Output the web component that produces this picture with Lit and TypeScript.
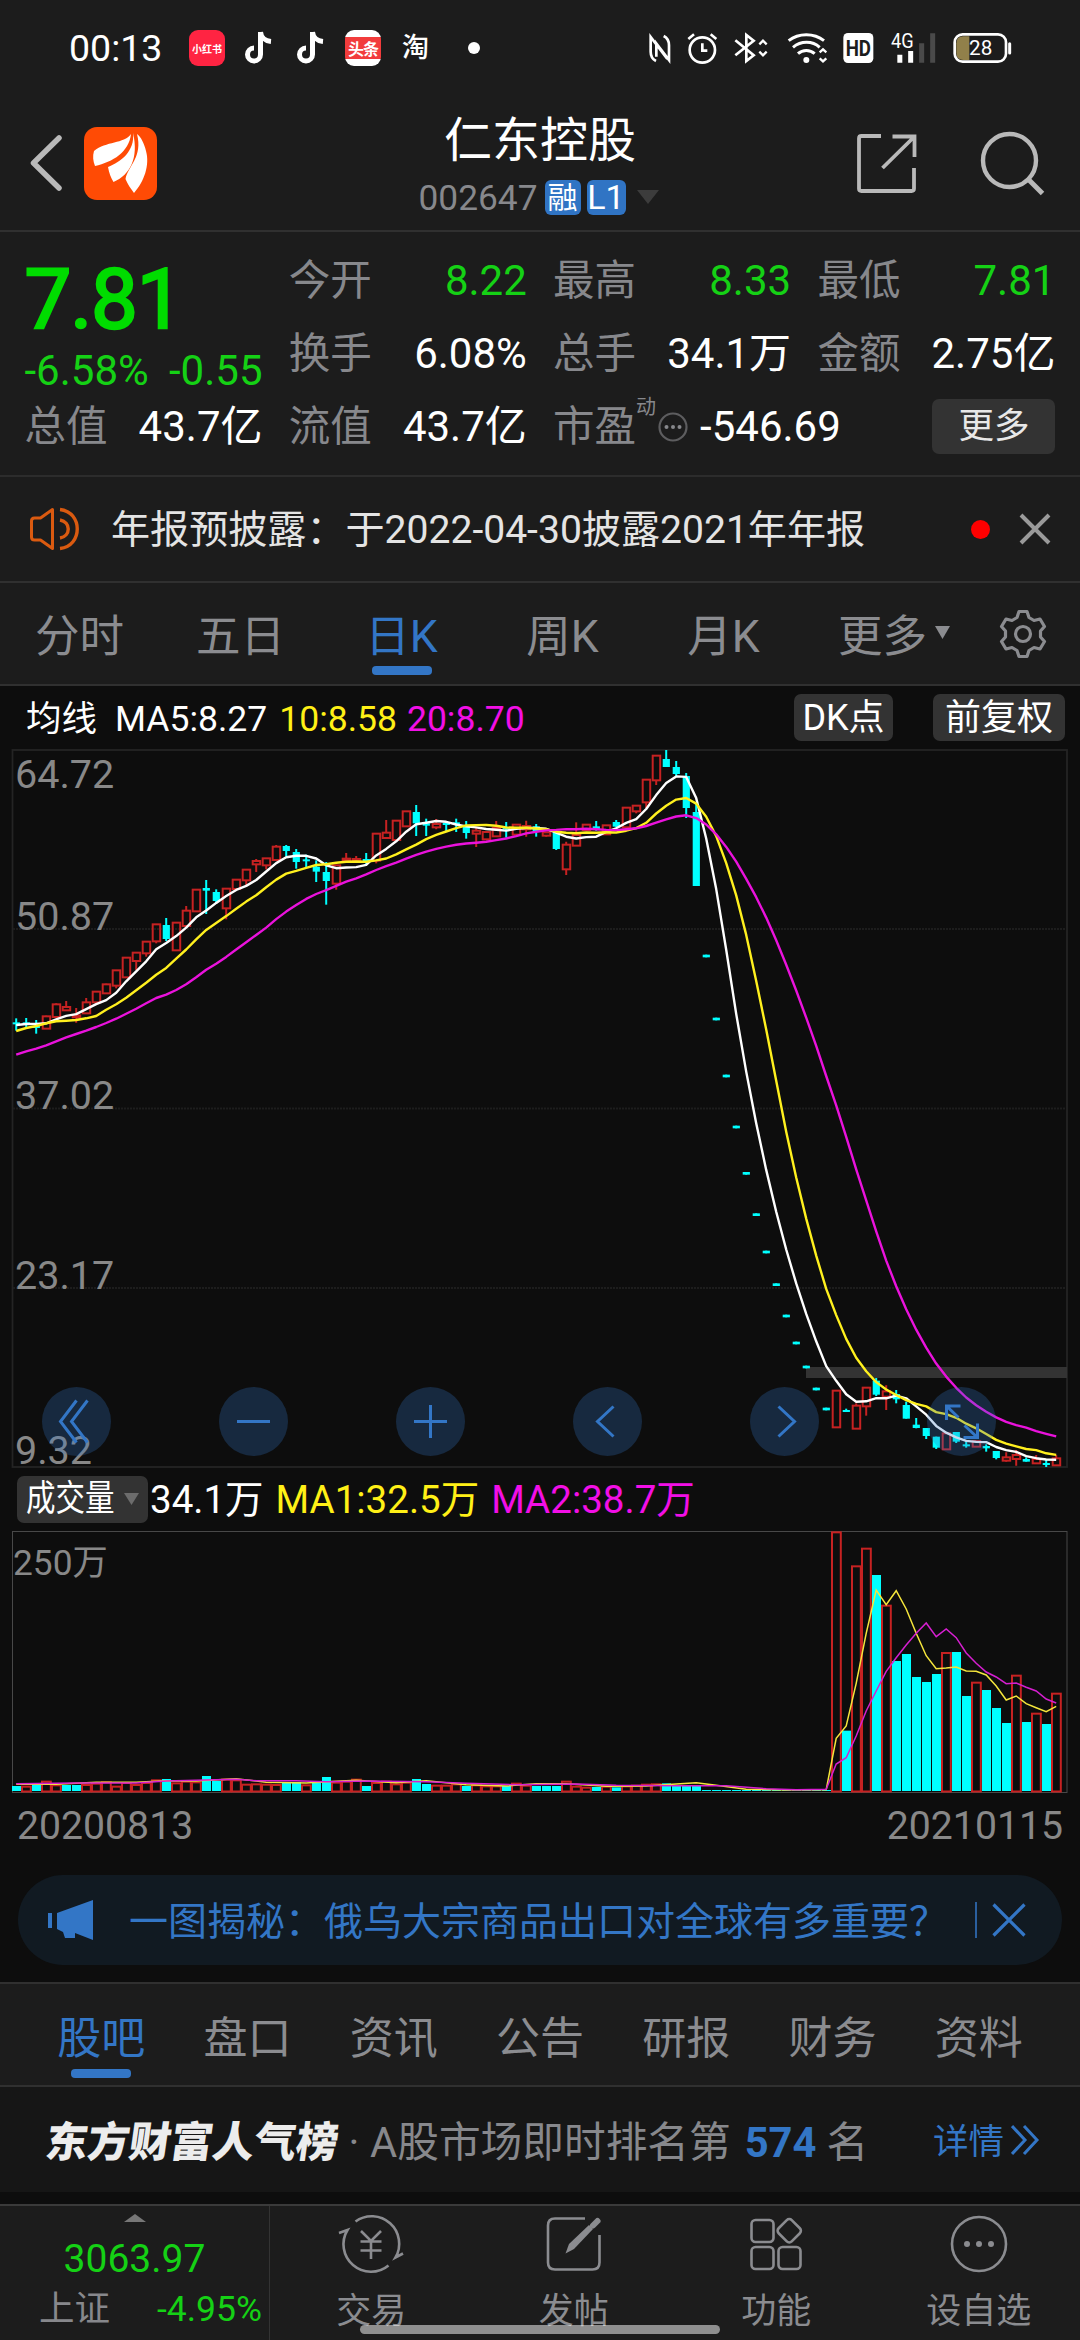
import { LitElement, html, svg, css } from "lit";
import { customElement } from "lit/decorators.js";

type Candle = [kind: "u" | "d", high: number, low: number, top: number, bottom: number];

/* Vertical values are thirds of a pixel below TOP. */
const TOP = 740;
const PITCH = 10;
const FIRST = 16.2;
const cx = (i: number) => FIRST + PITCH * i;
const py = (v: number) => TOP + v / 3;

const parse = (s: string, shift = 0): Candle[] =>
  s.trim().split(/\s+/).map((t) => {
    const n = t.slice(1).split(",").map((v) => Number(v) + shift);
    return [t[0] as "u" | "d", n[0], n[1], n[2], n[3]];
  });

const dashes = [648, 837, 1008, 1161, 1300, 1424, 1536, 1634, 1728, 1809, 1881, 1947, 2007].map(
  (v): Candle => ["d", v - 4, v + 4, v - 4, v + 4],
);

const candles: Candle[] = [
  ...parse(`d835,872,847,852 d834,862,847,852 d840,881,858,863 u827,866,829,866 u790,834,793,831
    u783,812,801,811 u804,848,826,830 u774,820,787,820 u755,787,755,787 u731,760,733,760
    u691,745,691,737 u653,712,653,712 u638,690,638,663 u605,650,605,640 u553,610,553,604
    d534,603,555,597 u548,631,548,631 u498,558,512,558 u449,514,449,514 d420,522,444,452
    d448,490,456,483 u446,538,446,505 u419,447,419,447 u389,436,389,421 u357,396,363,373
    u355,388,355,376 u315,360,320,360 d315,350,318,333 d327,386,336,366 d344,382,358,363
    d361,426,380,395 d366,494,396,423 u376,449,376,431 u339,366,356,362 u348,366,357,362
    d339,374,357,361 u281,370,281,362 u240,295,278,294 u242,300,242,300 u214,259,214,259
    d195,288,216,250 d236,288,250,257 u237,268,252,262 d245,275,249,254 d236,276,247,254
    d243,296,258,279 u262,321,272,281 u276,298,276,298 u243,289,264,289 d246,293,262,268
    u254,284,254,284 u242,290,258,268 d252,290,259,275 u276,290,277,287 d275,330,279,327
    u305,405,314,388 u247,317,285,317 u254,270,254,270 d243,272,259,270 u256,283,256,283
    d240,262,246,260 u203,262,203,262 u197,220,197,214 u119,205,119,187 u47,135,47,121
    d30,81,57,81 d63,108,81,102 d99,234,108,204 d190,438,216,438`),
  ...dashes,
  ...parse(
    `u392,502,392,502 d446,456,450,456 u430,506,437,506 u383,467,383,439 d354,408,362,404
    u376,450,394,410 d390,430,402,418 d425,476,435,476 d474,505,494,504 d504,537,504,528
    d530,567,530,563 u520,568,520,568 d516,549,516,545 d543,563,553,558 u543,560,543,560
    d553,575,558,565 d573,598,573,594 u577,605,592,602 u570,617,585,597 d592,605,597,605
    u585,610,597,610 d600,621,609,614 u585,616,595,616`,
    1560,
  ),
];

const closes = candles.map((c) => (c[0] === "u" ? c[3] : c[4]));

/* The head covers the days whose window starts before the visible range. */
const average = (span: number, head: number[]) =>
  closes.map((_, i) =>
    i < head.length ? head[i] : closes.slice(i - span + 1, i + 1).reduce((a, b) => a + b, 0) / span,
  );

const toPoints = (values: number[]) => values.map((v, i) => `${cx(i)},${py(v).toFixed(1)}`).join(" ");

const ma5 = toPoints(average(5, [855, 852, 852, 850]));
const ma10 = toPoints(average(10, [873, 864, 858, 850, 844, 842, 840, 835, 828]));
const ma20 = toPoints(
  average(20, [944, 934, 926, 916, 904, 892, 882, 872, 861, 849, 836, 821, 806, 790, 774, 764, 750, 733, 712]),
);

/* Volume tops are thirds of a pixel below 1740. */
const vy = (v: number) => 1740 + v / 3;
const volumes = `d138 u137 d135 u122 u133 d135 d135 u132 u128 u124 u137 u126 u132 u126 u118 d117 u127 u122 u124
  d108 d123 u116 u118 u131 u130 u131 u132 d126 d126 u133 d126 d111 u125 u122 u116 d138 u126 u122 u130 u125 d117
  d132 u134 u134 u130 d138 u133 u136 u136 d138 u128 u134 d138 d138 d138 u122 u137 u140 d141 u137 d142 u136 u134
  u131 u130 d130 d138 d138 d135 d150 d150 d150 d150 d150 d150 d150 d150 d150 d150 d150 d150 d150
  u-626 d-28 u-524 u-577 d-495 u-406 d-237 d-258 d-189 d-174 d-198 u-264 d-264 d-132 u-175 d-150 d-96 d-51 u-196
  d-54 u-82 d-48 u-142`
  .trim()
  .split(/\s+/)
  .map((t) => ({ up: t[0] === "u", top: Number(t.slice(1)) }));

const line = (pairs: number[][], tail: number[]) =>
  [...pairs, ...tail.map((v, k) => [82 + k, v - 660])].map(([i, v]) => `${cx(i)},${vy(v).toFixed(1)}`).join(" ");

const vma1 = line(
  [[0,133],[4,133],[8,127],[12,127],[15,122],[18,123],[22,116],[25,127],[29,129],[32,124],[34,121],[38,128],[41,122],
   [45,134],[49,138],[52,131],[55,131],[59,139],[63,138],[66,132],[68,128],[70,136],[73,148],[77,150],[81,149]],
  [655,618,490,340,210,254,212,267,340,407,446,444,441,453,454,465,498,540,528,551,563,575,559],
);
const vma2 = line(
  [[0,131],[6,129],[12,129],[15,123],[22,118],[24,122],[28,122],[31,125],[35,123],[41,125],[45,130],[50,134],[56,132],
   [60,136],[66,137],[71,137],[75,146],[78,149],[81,148]],
  [732,713,648,573,513,454,413,375,340,309,350,327,353,399,430,456,471,491,489,502,513,537,549],
);

@customElement("status-bar")
export class StatusBar extends LitElement {
  static styles = css`
    :host { display: flex; height: 96px; align-items: center; box-sizing: border-box; padding: 0 66px 0 69px; color: #fff; }
    .time { width: 120px; font-size: 37.500px; line-height: 96px; }
    .app { width: 36px; height: 36px; border-radius: 9px; display: grid; place-items: center; white-space: nowrap; font-weight: 700; }
    .red { background: #ff2442; font-size: 10px; }
    .news { background: linear-gradient(#fff 7px, #f23c3c 7px, #f23c3c 29px, #fff 29px); font-size: 16px; letter-spacing: -1px; margin-left: 20px; }
    .note { width: 28px; height: 34px; margin-left: 20px; }
    .note + .note { margin-left: 24px; }
    .tao { font-size: 27px; margin-left: 21px; line-height: 40px; font-weight: 500; }
    .dot { width: 12px; height: 12px; border-radius: 50%; background: #fff; margin-left: 39px; }
    .sys { width: 368px; height: 34px; margin-left: auto; overflow: visible; }
  `;
  note() {
    return html`<svg class="note" viewBox="0 0 28 34">
      <path d="M15.500 1v22.500a6.500 6.500 0 1 1-6.500-6.500" fill="none" stroke="#fff" stroke-width="5" />
      <path d="M15.500 1c.5 5 4.500 9 10.500 9.500" fill="none" stroke="#fff" stroke-width="5" />
    </svg>`;
  }
  render() {
    return html`
      <div class="time">00:13</div>
      <div class="app red">小红书</div>
      ${this.note()}${this.note()}
      <div class="app news">头条</div>
      <div class="tao">淘</div>
      <div class="dot"></div>
      <svg class="sys" viewBox="227 48 1104 102" fill="none" stroke="#fff" stroke-width="8">
        <path d="M257 138c-12-6-16-14-16-28V66l50 66M280 63c12 6 16 14 16 28v44l-38-50v40" />
        <circle cx="396" cy="105" r="38" />
        <path d="M396 85v22h15M354 72l17-14M438 72l-17-14" />
        <path d="M495 76l55 45-22 17V60l22 17-55 44" />
        <path d="M567 88l11-11 11 11M567 110l11 11 11-11" stroke-width="7" />
        <path d="M655 77c30-24 76-24 106 0M668 97c24-20 58-20 80 0M683 116c14-13 36-13 50 0" stroke-width="9" />
        <circle cx="708" cy="135" r="9" fill="#fff" stroke="none" />
        <path d="M748 112l10-9 10 9M748 130l10 9 10-9" stroke-width="7" />
        <rect x="819" y="54" width="90" height="90" rx="14" fill="#fff" stroke="none" />
        <text x="864" y="122" text-anchor="middle" font-size="64" font-weight="700" fill="#1c1c1c" stroke="none" textLength="76" lengthAdjust="spacingAndGlyphs">HD</text>
        <text x="962" y="98" font-size="58" fill="#fff" stroke="none" textLength="68" lengthAdjust="spacingAndGlyphs">4G</text>
        <path d="M988.500 119v24M1021 108v35" stroke-width="15" />
        <path d="M1054 85v58M1087 55v88" stroke-width="15" stroke="#4a4a4a" />
        <path d="M1197 64h-18q-21 0-21 21v29q0 21 21 21h18z" fill="#91804a" stroke="none" />
        <rect x="1153" y="58" width="154" height="82" rx="24" />
        <path d="M1318 86v28" stroke-width="9" stroke-linecap="round" />
        <text x="1231" y="121" text-anchor="middle" font-size="62" fill="#fff" stroke="none">28</text>
      </svg>
    `;
  }
}

@customElement("title-bar")
export class TitleBar extends LitElement {
  static styles = css`
    :host { display: grid; grid-template-columns: 300px 480px 300px; height: 134px; border-bottom: 2px solid #303030; box-sizing: content-box; }
    svg { display: block; }
    .left { width: 300px; height: 134px; }
    .mid { display: flex; flex-direction: column; align-items: center; padding-top: 14px; }
    .name { font-size: 48px; line-height: 62px; color: #fff; }
    .code { display: flex; align-items: center; gap: 7px; height: 36px; margin-top: 7px; font-size: 35.300px; color: #87888c; line-height: 36px; padding-right: 3px; }
    .code .num { position: relative; top: 1px; }
    .tag { height: 35px; border-radius: 6px; background: #3074c4; color: #fff; text-align: center; line-height: 35px; font-size: 30px; width: 36px; }
    .tag.l { width: 39px; font-size: 34px; margin-left: -1px; }
    .arrow { width: 22px; height: 14px; margin-left: 4px; }
  `;
  render() {
    return html`
      <svg class="left" viewBox="0 96 300 134">
        <path d="M59 138L33.500 163 59 188" fill="none" stroke="#b9b9b9" stroke-width="5.500" stroke-linecap="round" stroke-linejoin="round" />
        <rect x="84" y="127" width="73" height="73" rx="13" fill="#ff4b05" />
        <g fill="#fff">
          <path d="M131 134C124 144 106 141 94 151C92.500 156 93 161 95 166C113 162 129 152 131 134Z" />
          <path d="M133 133C135 151 121 162 108 167C109 173 111 178 113.500 182C130 175 139 158 133 133Z" />
          <path d="M137 134C143 157 128 166 125.500 179C127.500 184 131 189 134 193C144 182 150 165 146 151C144 143 141 137 137 134Z" />
        </g>
      </svg>
      <div class="mid">
        <div class="name">仁东控股</div>
        <div class="code">
          <span class="num">002647</span><span class="tag">融</span><span class="tag l">L1</span>
          <svg class="arrow" viewBox="0 0 22 14"><path d="M0 0h22L11 14z" fill="#3c3c3c" /></svg>
        </div>
      </div>
      <svg class="left" viewBox="780 96 300 134" fill="none" stroke="#b9b9b9">
        <path d="M881 136H861.500Q859 136 859 138.500V188.500Q859 191 861.500 191H911.500Q914 191 914 188.500V168M892.500 136.500H914.500V157M914 137L882.500 168" stroke-width="3.800" />
        <circle cx="1009.500" cy="160.500" r="26.500" stroke-width="4.400" />
        <path d="M1028 179L1042.500 193.500" stroke-width="5" />
      </svg>
    `;
  }
}

@customElement("quote-panel")
export class QuotePanel extends LitElement {
  static styles = css`
    :host { display: grid; grid-template-columns: repeat(4, 238px); grid-template-rows: repeat(3, 73px); column-gap: 26.300px; height: 245px; box-sizing: border-box; padding: 12px 23.500px 0 24.500px; border-bottom: 2px solid #2c2c2c; font-size: 42px; }
    .cell { display: flex; justify-content: space-between; align-items: center; color: #fff; line-height: 73px; white-space: nowrap; }
    .cell > :first-child { color: #87888c; font-size: 41.500px; }
    .cell .green { color: #15d115; }
    .price { grid-row: 1 / 3; color: #00dc00; }
    .big { font-size: 83.500px; -webkit-text-stroke: 2.400px #00dc00; line-height: 100px; padding-top: 6px; letter-spacing: -1.200px; }
    .delta { display: flex; justify-content: space-between; color: #15d115; font-size: 42px; line-height: 50px; margin-top: -4px; }
    .pe { grid-column: 3 / 5; justify-content: flex-start; }
    .label { display: flex; }
    .sup { font-size: 20px; line-height: 20px; align-self: flex-start; margin-top: 7px; color: #87888c; }
    .info { width: 30px; height: 30px; margin-left: 2px; margin-right: 12px; flex: none; }
    .more { margin-left: auto; width: 123px; height: 55px; border-radius: 7px; background: #333; color: #e8e8e8; font-size: 35.500px; line-height: 55px; text-align: center; }
  `;
  cell(label: string, value: string, green = false) {
    return html`<div class="cell"><span>${label}</span><span class=${green ? "green" : ""}>${value}</span></div>`;
  }
  render() {
    return html`
      <div class="price">
        <div class="big">7.81</div>
        <div class="delta"><span>-6.58%</span><span>-0.55</span></div>
      </div>
      ${this.cell("今开", "8.22", true)}${this.cell("最高", "8.33", true)}${this.cell("最低", "7.81", true)}
      ${this.cell("换手", "6.08%")}${this.cell("总手", "34.1万")}${this.cell("金额", "2.75亿")}
      ${this.cell("总值", "43.7亿")}${this.cell("流值", "43.7亿")}
      <div class="cell pe">
        <span class="label">市盈<span class="sup">动</span></span>
        <svg class="info" viewBox="0 0 30 30">
          <circle cx="15" cy="15" r="13.500" fill="none" stroke="#5d5d5f" stroke-width="2.200" />
          <g fill="#87888c"><circle cx="8.500" cy="15" r="2" /><circle cx="15" cy="15" r="2" /><circle cx="21.500" cy="15" r="2" /></g>
        </svg>
        <span>-546.69</span>
        <span class="more">更多</span>
      </div>
    `;
  }
}

@customElement("notice-bar")
export class NoticeBar extends LitElement {
  static styles = css`
    :host { display: flex; align-items: center; height: 106px; box-sizing: border-box; padding: 0 29px 0 29px; border-bottom: 2px solid #303030; color: #e4e4e4; font-size: 39.100px; line-height: 104px; white-space: nowrap; }
    .text { padding-top: 1px; }
    .speaker { width: 52px; height: 46px; margin-right: 30px; }
    .dot { width: 19px; height: 19px; border-radius: 50%; background: #f00; margin-left: auto; }
    .close { width: 32px; height: 32px; margin-left: 29px; }
  `;
  render() {
    return html`
      <svg class="speaker" viewBox="0 0 52 46" fill="none" stroke="#da5a10" stroke-width="3">
        <path d="M23.500 3.500V42.500L11.500 34H5.500Q2.500 34 2.500 31V15Q2.500 12 5.500 12H11.500Z" stroke-linejoin="round" />
        <path d="M31 3.500C54 6 54 40 31 42.500M31 14C42 16 42 30 31 32" stroke-width="3.400" />
      </svg>
      <span class="text">年报预披露：于2022-04-30披露2021年年报</span>
      <span class="dot"></span>
      <svg class="close" viewBox="0 0 32 32"><path d="M2 2L30 30M30 2L2 30" stroke="#9a9a9a" stroke-width="4" /></svg>
    `;
  }
}

@customElement("period-tabs")
export class PeriodTabs extends LitElement {
  static styles = css`
    :host { display: flex; height: 103px; box-sizing: border-box; border-bottom: 2px solid #303030; color: #8b8c90; font-size: 44.500px; line-height: 109px; }
    .tab { width: 161px; display: flex; flex-direction: column; align-items: center; }
    .tab:first-child { margin-left: -1px; }
    .active { color: #3376c6; }
    .bar { width: 60px; height: 9px; border-radius: 4px; background: #3376c6; margin-top: -26px; }
    .more { display: flex; align-items: center; gap: 8px; margin-left: 34px; height: 103px; }
    .more span { padding-top: 5px; }
    .tri { width: 15px; height: 13px; margin-bottom: 4px; }
    .gear { width: 48px; height: 50px; margin: 26px 0 0 49px; }
  `;
  render() {
    return html`
      ${["分时", "五日", "日K", "周K", "月K"].map(
        (t, i) => html`<div class="tab ${i === 2 ? "active" : ""}">${t}${i === 2 ? html`<div class="bar"></div>` : ""}</div>`,
      )}
      <div class="more"><span>更多</span><svg class="tri" viewBox="0 0 15 13"><path d="M0 0h15L7.500 13z" fill="#8b8c90" /></svg></div>
      <svg class="gear" viewBox="0 0 48 50" fill="none" stroke="#8b8c90" stroke-width="3.200" stroke-linejoin="round">
        <path d="M20 2.500H28L30 8.500L35 11.500L41 10L45.500 17.500L41.500 22V28L45.500 32.500L41 40L35 38.500L30 41.500L28 47.500H20L18 41.500L13 38.500L7 40L2.500 32.500L6.500 28V22L2.500 17.500L7 10L13 11.500L18 8.500Z" />
        <circle cx="24" cy="25" r="7.500" />
      </svg>
    `;
  }
}

@customElement("kline-chart")
export class KlineChart extends LitElement {
  static styles = css`
    :host { display: block; background: #0d0d0d; }
    .legend { display: flex; align-items: center; height: 63px; box-sizing: border-box; padding: 0 15px 0 26px; font-size: 35.500px; color: #fff; line-height: 62px; white-space: nowrap; }
    .legend > span { padding-top: 2px; }
    .legend .ma { margin-left: 18px; }
    .yellow { color: #fff016; margin-left: 12px; }
    .pink { color: #f20fe6; margin-left: 10px; }
    .legend .chip, .chip { height: 47px; line-height: 49px; padding-top: 0; border-radius: 7px; background: #333; font-size: 36px; text-align: center; }
    .dk { width: 99px; margin-left: auto; }
    .fq { width: 132px; margin-left: 40px; }
    svg { display: block; }
    .plot { width: 1080px; height: 719px; overflow: visible; }
    .vlegend { display: flex; align-items: center; height: 62px; font-size: 38.500px; line-height: 60px; padding-left: 17px; color: #fff; white-space: nowrap; }
    .vlegend > span { padding-top: 2px; }
    .vlegend .vol { display: flex; align-items: center; width: 131px; text-align: left; margin-right: 2px; box-sizing: border-box; padding: 0 0 0 9px; }
    .narrow { display: inline-block; width: 90px; transform: scaleX(0.82); transform-origin: left; }
    .tri { width: 15px; height: 12px; margin-left: 8px; flex: none; }
    .v1 { margin-left: 12px; }
    .v2 { margin-left: 12px; }
    .bars { width: 1080px; height: 266px; }
    .dates { display: flex; justify-content: space-between; padding: 0 17px; height: 79px; line-height: 60px; font-size: 39.200px; color: #888; box-sizing: border-box; }
  `;

  candle(c: Candle, i: number) {
    const [kind, high, low, top, bottom] = c;
    const x = cx(i);
    if (kind === "d") {
      return svg`<g fill="#00ffff">
        <rect x=${x - 1} y=${py(high)} width="2" height=${(low - high) / 3} />
        <rect x=${x - 3.500} y=${py(top)} width="7.200" height=${Math.max(2, (bottom - top) / 3)} />
      </g>`;
    }
    const h = Math.max(2, (bottom - top) / 3);
    return svg`<g stroke="#c62222" stroke-width="2" fill="none">
      <rect x=${x - 3.500} y=${py(top)} width="7.500" height=${h} />
      <path d=${`M${x} ${py(high)}V${py(top)}M${x} ${py(bottom)}V${py(low)}`} />
    </g>`;
  }

  volume(v: { up: boolean; top: number }, i: number) {
    const x = cx(i);
    const y = vy(v.top);
    return v.up
      ? svg`<rect x=${x - 4.200} y=${y + 1} width="8.800" height=${1790.500 - y} fill="none" stroke="#c62222" stroke-width="2" />`
      : svg`<rect x=${x - 4.200} y=${y} width="9" height=${1791 - y} fill="#00ffff" />`;
  }

  control(x: number, d: string, w = 3) {
    return svg`<circle cx=${x} cy="1421.500" r="34.500" fill="#3578c8" fill-opacity="0.270" />
      <path transform=${`translate(${x} 1421.500)`} d=${d} fill="none" stroke="#3376c6" stroke-width=${w} />`;
  }

  render() {
    return html`
      <div class="legend">
        <span>均线</span><span class="ma">MA5:8.27</span><span class="yellow">10:8.58</span><span class="pink">20:8.70</span>
        <span class="chip dk">DK点</span><span class="chip fq">前复权</span>
      </div>
      <svg class="plot" viewBox="0 749 1080 719">
        <rect x="12.500" y="750" width="1054.500" height="717" fill="none" stroke="#242424" stroke-width="1.800" />
        <path d="M13 929H1066M13 1108.500H1066M13 1288H1066" stroke="#1d1d1d" stroke-width="2" stroke-dasharray="2 1" />
        <rect x="806" y="1367" width="261" height="11" fill="#333" />
        ${candles.map((c, i) => this.candle(c, i))}
        <g fill="none" stroke-width="2.400" stroke-linejoin="round">
          <polyline points=${ma5} stroke="#fff" />
          <polyline points=${ma10} stroke="#fff01e" />
          <polyline points=${ma20} stroke="#ea12dc" />
        </g>
        <g font-size="39.500" fill="#888">
          <text x="15" y="788">64.72</text>
          <text x="15" y="930">50.87</text>
          <text x="15" y="1109">37.02</text>
          <text x="15" y="1289">23.17</text>
          <text x="15" y="1464">9.32</text>
        </g>
        ${this.control(76.500, "M0 -21L-16 0L0 21M11 -21L-5 0L11 21", 3)}
        ${this.control(253.500, "M-16.500 0H16.500")}
        ${this.control(430.500, "M-16.500 0H16.500M0 -16.500V16.500")}
        ${this.control(607.500, "M6 -15L-10 0L6 15")}
        ${this.control(784.500, "M-6 -15L10 0L-6 15")}
        ${this.control(961.500, "M-1 -15.500H-15V-1.500M-15 -15.500L-3 -4M16 2V16H2M16 16L3 4")}
      </svg>
      <div class="vlegend">
        <span class="chip vol"><span class="narrow">成交量</span><svg class="tri" viewBox="0 0 15 12"><path d="M0 0h15L7.500 12z" fill="#6c6c6c" /></svg></span>
        <span>34.1万</span><span class="yellow v1">MA1:32.5万</span><span class="pink v2">MA2:38.7万</span>
      </div>
      <svg class="bars" viewBox="0 1530 1080 266">
        <rect x="12.500" y="1531.500" width="1054.500" height="261" fill="none" stroke="#484848" />
        <text x="13" y="1575" font-size="35.300" fill="#888">250万</text>
        ${volumes.map((v, i) => this.volume(v, i))}
        <g fill="none" stroke-width="1.500">
          <polyline points=${vma1} stroke="#f5e63c" />
          <polyline points=${vma2} stroke="#d61fd0" />
        </g>
      </svg>
      <div class="dates"><span>20200813</span><span>20210115</span></div>
    `;
  }
}

@customElement("promo-banner")
export class PromoBanner extends LitElement {
  static styles = css`
    :host { display: block; background: #0d0d0d; padding: 0 18px 17px; }
    .pill { display: flex; align-items: center; height: 90px; border-radius: 45px; background: #111a22; color: #3376c6; font-size: 39px; line-height: 90px; white-space: nowrap; padding: 0 35px 0 29px; }
    .text { padding-top: 4px; }
    .horn { width: 47px; height: 42px; margin-right: 35px; }
    .rule { width: 2px; height: 36px; background: #2a5f9f; margin-left: auto; }
    .close { width: 36px; height: 36px; margin-left: 14px; }
  `;
  render() {
    return html`<div class="pill">
      <svg class="horn" viewBox="0 0 47 42" fill="#3376c6">
        <path d="M1 14h4v15H1zM10 14L46 1V41L28 34V39H18L16 33L10 30Z" />
      </svg>
      <span class="text">一图揭秘：俄乌大宗商品出口对全球有多重要？</span>
      <span class="rule"></span>
      <svg class="close" viewBox="0 0 36 36"><path d="M2.500 2.500L33.500 33.500M33.500 2.500L2.500 33.500" stroke="#3376c6" stroke-width="3.200" /></svg>
    </div>`;
  }
}

@customElement("info-tabs")
export class InfoTabs extends LitElement {
  static styles = css`
    :host { display: flex; height: 105px; box-sizing: border-box; border-top: 2px solid #303030; border-bottom: 2px solid #303030; padding: 0 28px; color: #8b8c90; font-size: 44px; line-height: 110px; }
    .tab { flex: 1; display: flex; flex-direction: column; align-items: center; }
    .active { color: #3376c6; }
    .bar { width: 60px; height: 9px; border-radius: 4px; background: #3376c6; margin-top: -25px; }
  `;
  render() {
    return ["股吧", "盘口", "资讯", "公告", "研报", "财务", "资料"].map(
      (t, i) => html`<div class="tab ${i ? "" : "active"}">${t}${i ? "" : html`<div class="bar"></div>`}</div>`,
    );
  }
}

@customElement("rank-row")
export class RankRow extends LitElement {
  static styles = css`
    :host { display: flex; align-items: center; height: 117px; box-sizing: border-box; background: #161616; border-bottom: 12px solid #0d0d0d; padding: 5px 39px 0 46px; font-size: 41.700px; color: #87888c; line-height: 105px; white-space: nowrap; }
    .brand { font-weight: 900; color: #ececec; font-size: 42px; letter-spacing: -0.300px; transform: skewX(-8deg); width: 292px; }
    .sep { width: 32px; text-align: center; }
    .num { color: #3376c6; font-weight: 700; margin: 0 10px 0 14px; }
    .detail { margin-left: auto; font-size: 35.500px; color: #3376c6; }
    .chev { width: 30px; height: 32px; margin: -5px 0 0 7px; }
  `;
  render() {
    return html`
      <span class="brand">东方财富人气榜</span><span class="sep">·</span><span>A股市场即时排名第</span
      ><span class="num">574</span><span>名</span><span class="detail">详情</span>
      <svg class="chev" viewBox="0 0 30 32"><path d="M1 2L14 16L1 30M13 2L26 16L13 30" fill="none" stroke="#3376c6" stroke-width="3" /></svg>
    `;
  }
}

@customElement("bottom-nav")
export class BottomNav extends LitElement {
  static styles = css`
    :host { display: grid; grid-template-columns: 270px repeat(4, 202.500px); height: 136px; box-sizing: border-box; border-top: 2px solid #3a3a3a; position: relative; color: #8b8c90; }
    .index { border-right: 1px solid #333; display: flex; flex-direction: column; align-items: center; padding-top: 8px; color: #15d115; }
    .up { width: 22px; height: 8px; display: block; }
    .value { font-size: 39px; line-height: 46px; margin-top: 14px; }
    .row { display: flex; justify-content: space-between; align-self: stretch; padding: 0 7px 0 39px; font-size: 35.500px; line-height: 46px; margin-top: 4px; }
    .row > :first-child { color: #87888c; }
    .item { display: flex; flex-direction: column; align-items: center; font-size: 35px; }
    .icon { width: 66px; height: 60px; margin-top: 8px; }
    .item span { line-height: 46px; margin-top: 15px; }
    .home { position: absolute; left: 360px; bottom: 6px; width: 360px; height: 9px; border-radius: 5px; background: rgba(255, 255, 255, 0.510); }
  `;
  item(label: string, icon: unknown) {
    return html`<div class="item">
      <svg class="icon" viewBox="-33 -30 66 60" fill="none" stroke="#8b8c90" stroke-width="2.600">${icon}</svg>
      <span>${label}</span>
    </div>`;
  }
  render() {
    return html`
      <div class="index">
        <svg class="up" viewBox="0 0 22 8"><path d="M0 8L11 0L22 8z" fill="#777" /></svg>
        <div class="value">3063.97</div>
        <div class="row"><span>上证</span><span>-4.95%</span></div>
      </div>
      ${this.item(
        "交易",
        svg`<path d="M-15.500 -22.500A27.500 27.500 0 0 1 24.500 13.500L32 9.500" />
          <path d="M17.500 21.500A27.500 27.500 0 0 1 -23.500 -14L-32 -11" />
          <path d="M-10 -13L0 -3L10 -13M-10.500 -2.500H10.500M-10.500 6.500H10.500M0 -3V15" />`,
      )}
      ${this.item(
        "发帖",
        svg`<path d="M11 -25.500H-19Q-26 -25.500 -26 -18.500V18.500Q-26 25.500 -19 25.500H18.500Q25.500 25.500 25.500 18.500V-9" />
          <path d="M-8.500 9.500L-5 0L15 -19L19 -15L0 5Z" fill="#8b8c90" stroke="none" />
          <path d="M19 -18.500L23.500 -23" stroke-width="6" stroke-linecap="round" />`,
      )}
      ${this.item(
        "功能",
        svg`<rect x="-24.500" y="-24" width="22" height="22" rx="4" /><rect x="-24.500" y="3" width="22" height="22" rx="4" />
          <rect x="2.500" y="3" width="22" height="22" rx="4" /><rect x="4" y="-22.500" width="18.500" height="18.500" rx="3.500" transform="rotate(45 13.250 -13.250)" />`,
      )}
      ${this.item(
        "设自选",
        svg`<circle r="27" /><g fill="#8b8c90" stroke="none"><circle cx="-12" r="3" /><circle r="3" /><circle cx="12" r="3" /></g>`,
      )}
      <div class="home"></div>
    `;
  }
}

@customElement("app-root")
export class AppRoot extends LitElement {
  static styles = css`
    :host { display: flex; flex-direction: column; width: 1080px; height: 2340px; overflow: hidden; background: #1c1c1c; font-family: Roboto, "Noto Sans CJK SC", sans-serif; }
    title-bar, quote-panel, notice-bar, period-tabs, kline-chart, promo-banner, info-tabs, rank-row, bottom-nav, status-bar { flex: none; }
  `;
  render() {
    return html`
      <status-bar></status-bar>
      <title-bar></title-bar>
      <quote-panel></quote-panel>
      <notice-bar></notice-bar>
      <period-tabs></period-tabs>
      <kline-chart></kline-chart>
      <promo-banner></promo-banner>
      <info-tabs></info-tabs>
      <rank-row></rank-row>
      <bottom-nav></bottom-nav>
    `;
  }
}
